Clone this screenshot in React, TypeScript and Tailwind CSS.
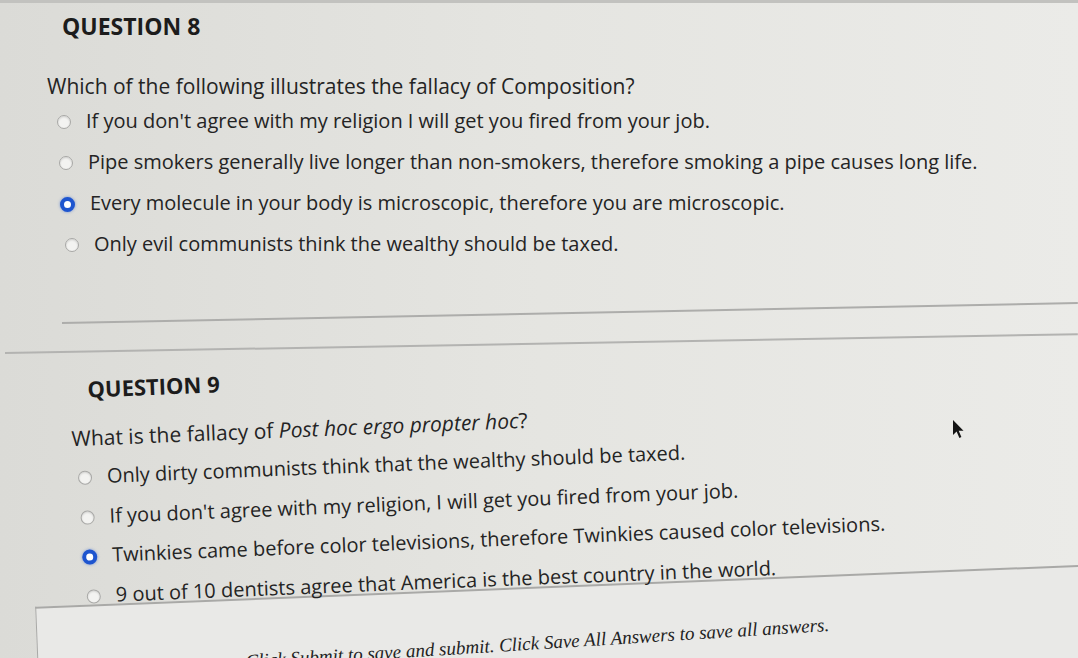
import React from 'react';

type Option = { text: string; pad: string; checked?: boolean };

const q8Options: Option[] = [
  { text: "If you don't agree with my religion I will get you fired from your job.", pad: 'pl-[56px]' },
  { text: 'Pipe smokers generally live longer than non-smokers, therefore smoking a pipe causes long life.', pad: 'pl-[58px]' },
  { text: 'Every molecule in your body is microscopic, therefore you are microscopic.', pad: 'pl-[60px]', checked: true },
  { text: 'Only evil communists think the wealthy should be taxed.', pad: 'pl-[64px]' },
];

const q9Options: Option[] = [
  { text: 'Only dirty communists think that the wealthy should be taxed.', pad: 'pl-[72px]' },
  { text: "If you don't agree with my religion, I will get you fired from your job.", pad: 'pl-[73px]' },
  { text: 'Twinkies came before color televisions, therefore Twinkies caused color televisions.', pad: 'pl-[74px]', checked: true },
  { text: '9 out of 10 dentists agree that America is the best country in the world.', pad: 'pl-[76px]' },
];

const Radio = ({ checked }: { checked?: boolean }) => (
  <span className="flex w-[15px] h-[15px] shrink-0 items-center justify-center">
    {checked ? (
      <span className="w-[15px] h-[15px] rounded-full border-[4px] border-[#1e55cf] bg-white shadow-[0_0_3px_rgba(30,85,207,0.55)]" />
    ) : (
      <span className="w-[14px] h-[14px] rounded-full border border-[#a8a8a6] bg-[#f3f3f1] shadow-[inset_0_1px_2px_rgba(0,0,0,0.15)]" />
    )}
  </span>
);

const OptionRow = ({ option }: { option: Option }) => (
  <label className={`flex h-[26px] items-center gap-[15px] text-[20px] leading-[26px] ${option.pad}`}>
    <Radio checked={option.checked} />
    <span className="whitespace-nowrap -translate-y-[1px]">{option.text}</span>
  </label>
);

export default function App() {
  return (
    <div className="relative w-[1078px] h-[658px] overflow-hidden bg-linear-to-r from-[#dbdbd7] via-[#e5e5e1] to-[#ebebe8] font-['Open_Sans',sans-serif] text-[#242424]">
      <div className="h-[3px] bg-[#c2c2bf]" />

      {/* question 8 */}
      <h2 className="pt-[9px] pl-[62px] text-[23px] font-bold leading-[28px] text-[#1c1c1c]">QUESTION 8</h2>
      <p className="mt-[32px] pl-[47px] text-[21px] leading-[28px] whitespace-nowrap">
        Which of the following illustrates the fallacy of Composition?
      </p>
      <div className="mt-[9px] flex flex-col gap-[15px]">
        {q8Options.map((o) => (
          <OptionRow key={o.text} option={o} />
        ))}
      </div>

      <div className="mt-[64px] ml-[62px] h-[2px] bg-[#adadab] origin-left -rotate-[1.13deg]" />
      <div className="mt-[28px] ml-[5px] h-[2px] bg-[#b3b3b1] origin-left -rotate-[1deg]" />

      {/* question 9 */}
      <div className="w-[1120px] origin-top-left -rotate-[2.3deg]">
        <h2 className="pt-[24px] pl-[86px] text-[22px] font-bold leading-[28px] text-[#1c1c1c]">QUESTION 9</h2>
        <p className="mt-[21px] pl-[68px] text-[21px] leading-[28px] whitespace-nowrap">
          What is the fallacy of <i>Post hoc ergo propter hoc</i>?
        </p>
        <div className="relative z-10 mt-[13px] flex flex-col gap-[13.7px]">
          {q9Options.map((o) => (
            <OptionRow key={o.text} option={o} />
          ))}
        </div>

        <div className="-mt-[5px] ml-[25px] w-[1100px] h-[150px] border-t-2 border-l border-[#a9a9a7] bg-[#e9e9e7] pt-[36px] pr-[307px] text-right font-['Liberation_Serif',serif] text-[19px] italic leading-[24px] text-[#222] whitespace-nowrap">
          <span className="inline-block origin-right -rotate-[1.3deg]">
            Click Submit to save and submit. Click Save All Answers to save all answers.
          </span>
        </div>
      </div>

      {/* mouse pointer */}
      <svg className="absolute left-[952px] top-[419px]" width="12" height="20" viewBox="0 0 12 20">
        <path d="M1 1 L1 16 L4.6 12.6 L7.4 19 L9.4 18.1 L6.7 11.8 L11.5 11.8 Z" fill="#141414" />
      </svg>
    </div>
  );
}
